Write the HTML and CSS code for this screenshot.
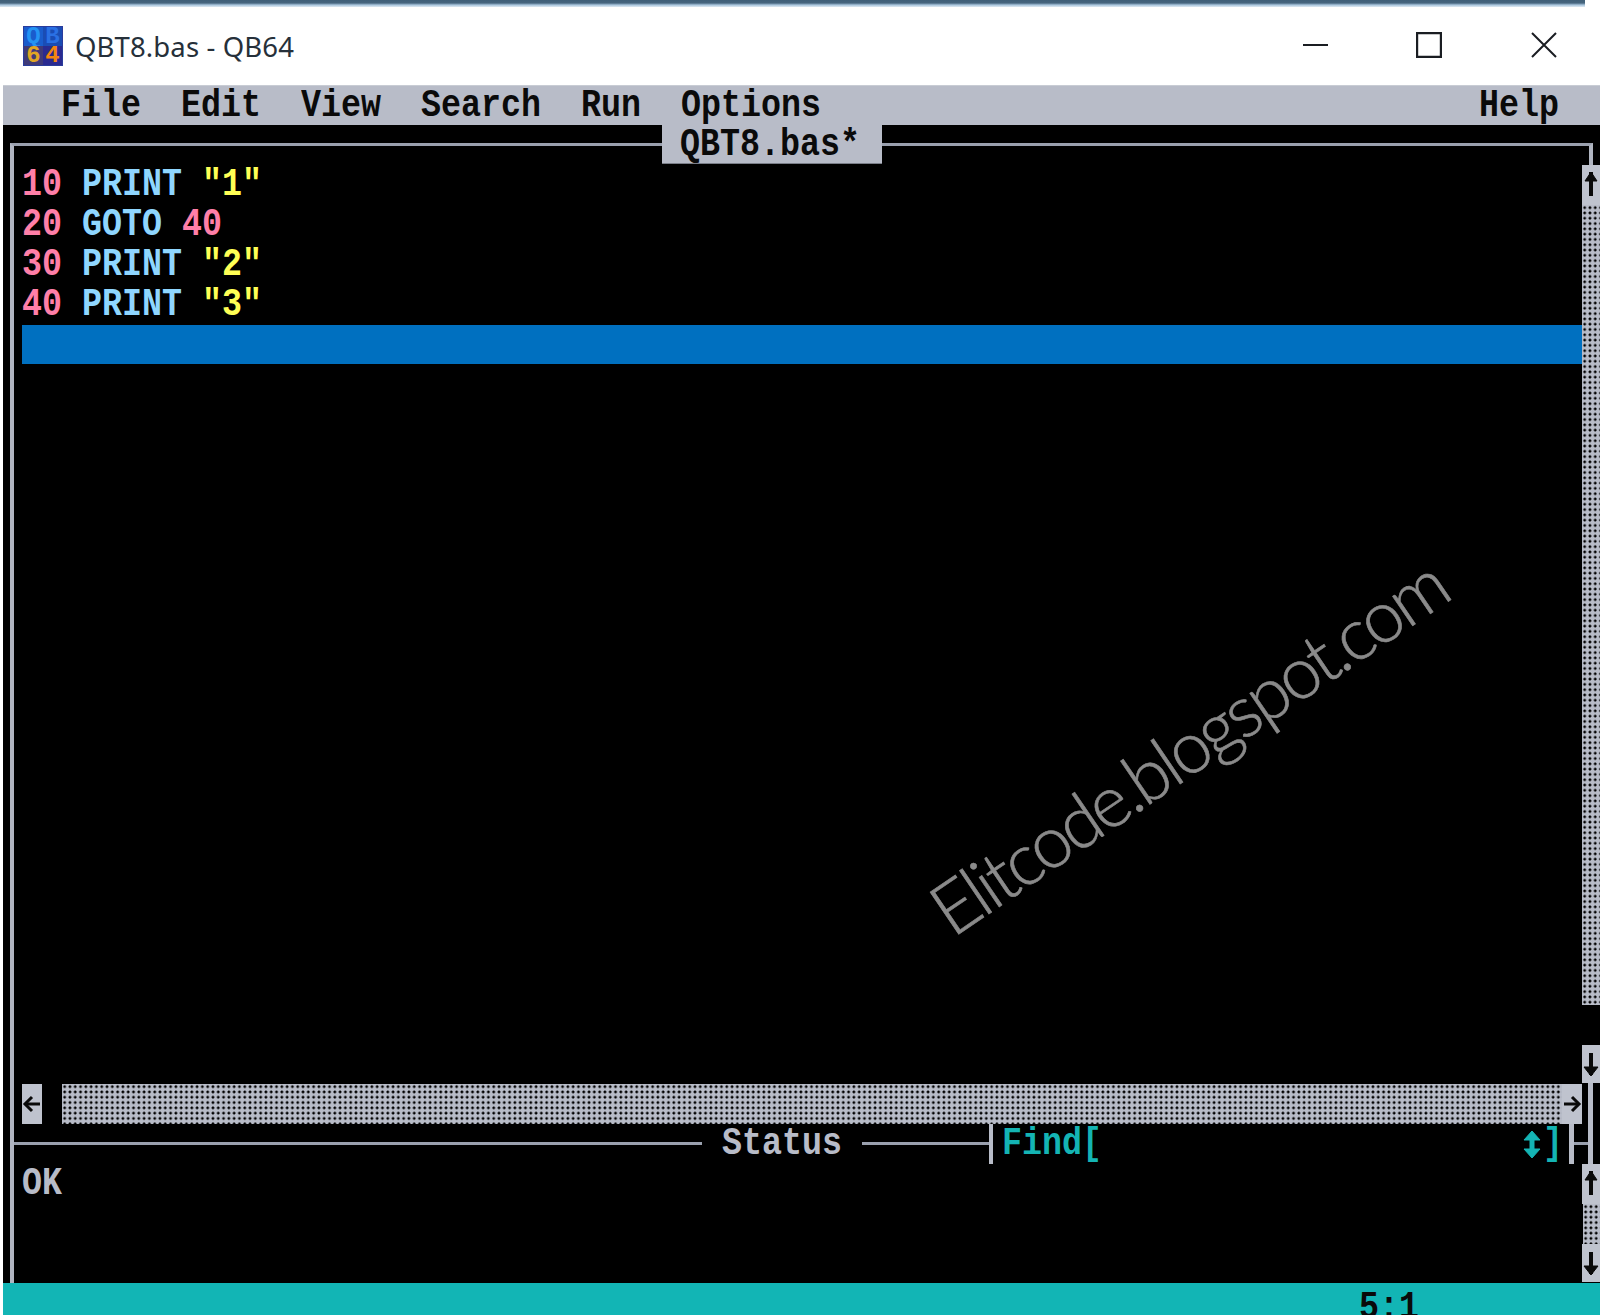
FILE: index.html
```html
<!DOCTYPE html>
<html lang="en">
<head>
<meta charset="utf-8">
<title>QBT8.bas - QB64</title>
<link rel="stylesheet" href="styles.css">
</head>
<body>
<svg class="defs" width="0" height="0" aria-hidden="true">
  <defs>
    <symbol id="arrow-up" viewBox="0 0 20 40"><path d="M10 7 L10 31" stroke-width="4"/><path d="M4 16 L10 7 L16 16 Z" stroke-width="1"/></symbol>
    <symbol id="arrow-down" viewBox="0 0 20 40"><path d="M10 8 L10 30" stroke-width="4"/><path d="M3 22 L10 31 L17 22 Z" stroke-width="1"/></symbol>
    <symbol id="arrow-left" viewBox="0 0 20 40"><path d="M4 20 L18 20" stroke-width="3"/><path d="M10 13 L3 20 L10 27" stroke-width="3" fill="none"/></symbol>
    <symbol id="arrow-right" viewBox="0 0 20 40"><path d="M2 20 L16 20" stroke-width="3"/><path d="M10 13 L17 20 L10 27" stroke-width="3" fill="none"/></symbol>
    <symbol id="arrow-both" viewBox="0 0 20 40"><path d="M10 10 L10 30" stroke-width="5"/><path d="M2 16 L10 7 L18 16 Z M2 25 L10 34 L18 25 Z" stroke-width="1"/></symbol>
  </defs>
</svg>
<div class="top-strip"></div>
<header class="titlebar">
  <div class="app-icon"><span class="q1">Q</span><span class="q2">B</span><span class="q3">6</span><span class="q4">4</span></div>
  <span class="win-title">QBT8.bas - QB64</span>
  <div class="win-controls">
    <svg class="ctl ctl-min" viewBox="0 0 26 26"><path d="M0 13H25"/></svg>
    <svg class="ctl ctl-max" viewBox="0 0 26 26"><path d="M1 1H25V25H1Z"/></svg>
    <svg class="ctl ctl-close" viewBox="0 0 26 26"><path d="M1 1L25 25M25 1L1 25"/></svg>
  </div>
</header>
<nav class="menubar dos">
  <span class="m"><span class="t">File</span></span>
  <span class="m"><span class="t">Edit</span></span>
  <span class="m"><span class="t">View</span></span>
  <span class="m"><span class="t">Search</span></span>
  <span class="m"><span class="t">Run</span></span>
  <span class="m"><span class="t">Options</span></span>
  <span class="m m-help"><span class="t">Help</span></span>
</nav>
<main class="ide dos">
  <div class="left">
    <div class="code">
      <div class="row"><span class="t"><span class="num">10</span> <span class="kw">PRINT</span> <span class="str">"1"</span></span></div>
      <div class="row"><span class="t"><span class="num">20</span> <span class="kw">GOTO</span> <span class="num">40</span></span></div>
      <div class="row"><span class="t"><span class="num">30</span> <span class="kw">PRINT</span> <span class="str">"2"</span></span></div>
      <div class="row"><span class="t"><span class="num">40</span> <span class="kw">PRINT</span> <span class="str">"3"</span></span></div>
      <div class="row current"></div>
    </div>
    <div class="hscroll">
      <div class="arrow-box"><svg class="ico"><use href="#arrow-left"/></svg></div>
      <div class="dither htrack"></div>
      <div class="arrow-box"><svg class="ico"><use href="#arrow-right"/></svg></div>
    </div>
    <div class="statusline">
      <div class="rule"></div>
      <span class="status-label"><span class="t">Status</span></span>
      <div class="rule rule-short"></div>
      <div class="find">
        <span class="t">Find[</span>
        <svg class="ico ico-both"><use href="#arrow-both"/></svg>
        <span class="t">]</span>
      </div>
      <div class="rule rule-end"></div>
    </div>
    <div class="output"><span class="t">OK</span></div>
  </div>
  <div class="right">
    <div class="corner"></div>
    <div class="arrow-box vbox"><svg class="ico"><use href="#arrow-up"/></svg></div>
    <div class="dither vtrack"></div>
    <div class="vgap"></div>
    <div class="arrow-box vbox vbox-low"><svg class="ico"><use href="#arrow-down"/></svg></div>
    <div class="stub"></div>
    <div class="arrow-box vbox"><svg class="ico"><use href="#arrow-up"/></svg></div>
    <div class="vtrack-small"><div class="dither"></div></div>
    <div class="arrow-box vbox vbox-low"><svg class="ico"><use href="#arrow-down"/></svg></div>
  </div>
  <div class="tab"><span class="t">QBT8.bas*</span></div>
  <div class="watermark">Elitcode.blogspot.com</div>
</main>
<footer class="statusbar dos"><span class="t">5:1</span></footer>
</body>
</html>
```
FILE: styles.css
```css
* { box-sizing: border-box; }
html, body { margin: 0; padding: 0; }
body {
  width: 1600px;
  height: 1315px;
  overflow: hidden;
  background: #fff;
  display: flex;
  flex-direction: column;
}
.defs { position: absolute; }
.top-strip {
  height: 7px;
  flex: none;
  background: linear-gradient(#3f5f78 0, #47667f 3px, #a9c6de 5px, #dfe9f2 7px);
  margin-right: 15px;
}
.titlebar {
  height: 78px;
  flex: none;
  display: flex;
  align-items: center;
  padding-left: 23px;
  background: #fff;
}
.app-icon {
  width: 40px;
  height: 40px;
  margin-top: -1px;
  display: grid;
  grid-template-columns: 19px 19px;
  grid-template-rows: 19px 19px;
  background: #1c2f9a;
  border: 1px solid #2a3c9c;
  font: bold 24px/19px "Liberation Mono", monospace;
  text-align: center;
}
.q1 { background: #1a5ccc; color: #2494f4; }
.q2 { background: #1a4cb4; color: #2a70e4; }
.q3 { background: #3f3a78; color: #e0a624; }
.q4 { background: #2a2a90; color: #f4860f; }
.win-title {
  margin-left: 12px;
  font: 400 27.5px "Noto Sans", "Open Sans", sans-serif;
  color: #26303a;
  letter-spacing: 0.12px;
}
.win-controls {
  margin-left: auto;
  margin-top: -2px;
  display: flex;
  align-items: center;
  padding-right: 43px;
  gap: 87px;
}
.ctl { width: 26px; height: 26px; fill: none; stroke: #1a1d22; stroke-width: 2; display: block; }
.ctl-max { stroke-width: 2.4; }
.ctl-close { margin-left: 2px; }

.dos {
  font-family: "Liberation Mono", monospace;
  font-weight: 700;
  font-size: 33.33px;
  line-height: 40px;
}
.t { display: inline-block; transform: scaleY(1.14); white-space: pre; }

.menubar {
  height: 40px;
  flex: none;
  margin-left: 3px;
  background: #b8bcc8;
  color: #0a0a0a;
  display: flex;
  gap: 40px;
  padding: 0 41px 0 58px;
  border-top: 1px solid #c8ccd4;
}
.m-help { margin-left: auto; }

.ide {
  flex: 1;
  min-height: 0;
  margin-left: 3px;
  background: #000;
  color: #b8bcc8;
  display: flex;
  position: relative;
}
.left {
  flex: 1;
  min-width: 0;
  margin: 18px 0 0 7px;
  border-left: 4px solid #b0b5c1;
  border-top: 3px solid #9aa0ae;
  display: flex;
  flex-direction: column;
}
.code {
  flex: 1;
  padding: 19px 0 0 8px;
}
.row { height: 40px; }
.row.current { background: #0070c0; height: 39px; }
.num { color: #ff7fa8; }
.kw { color: #8fd6ff; }
.str { color: #ffff55; }

.hscroll {
  height: 40px;
  flex: none;
  display: flex;
  padding-left: 8px;
}
.arrow-box { background: #bfc3ce; width: 20px; height: 40px; color: #0a0a0a; flex: none; }
.ico { display: block; width: 20px; height: 40px; stroke: #0a0a0a; fill: #0a0a0a; }
.htrack { flex: 1; margin-left: 20px; }
.dither {
  background-color: #b8bcc8;
  background-image: radial-gradient(circle at center, #000 0.9px, transparent 1.8px);
  background-size: 5.3px 5.3px;
}

.statusline {
  height: 40px;
  flex: none;
  display: flex;
  align-items: center;
}
.rule { height: 3px; background: #9aa0ae; flex: 1; margin-top: -1px; }
.status-label { padding: 0 20px; width: 160px; }
.rule-short { flex: none; width: 127px; }
.find {
  width: 585px;
  height: 40px;
  border-left: 4px solid #b8bcc8;
  border-right: 5px solid #b8bcc8;
  color: #14b4b4;
  display: flex;
  padding: 0 6px 0 9px;
}
.find .ico { margin-left: auto; margin-right: 1px; stroke: #14b4b4; fill: #14b4b4; }
.rule-end { flex: none; width: 8px; }

.output {
  flex: none;
  height: 119px;
  padding-left: 8px;
}

.right {
  flex: none;
  width: 18px;
  display: flex;
  flex-direction: column;
}
.corner {
  height: 22px;
  flex: none;
  width: 11px;
  margin-top: 18px;
  border-top: 3px solid #9aa0ae;
  border-right: 4px solid #b0b5c1;
}
.vbox { width: 18px; }
.vbox .ico { margin-left: -1px; }
.vbox-low { height: 38px; }
.vtrack { height: 800px; flex: none; }
.vgap { height: 40px; flex: none; }
.stub {
  height: 81px;
  flex: none;
  width: 11px;
  border-right: 5px solid #b8bcc8;
  background: linear-gradient(#9aa0ae,#9aa0ae) no-repeat 0 59px/100% 3px;
}
.vtrack-small { height: 40px; flex: none; padding-left: 1px; }
.vtrack-small .dither { height: 100%; }

.tab {
  position: absolute;
  left: 659px;
  top: 0;
  width: 220px;
  height: 39px;
  background: #b8bcc8;
  color: #0a0a0a;
  padding-left: 18px;
  border-bottom: 1px solid #7a7e88;
}
.watermark {
  position: absolute;
  left: 958px;
  top: 740px;
  font: 300 72px "Lato", sans-serif;
  letter-spacing: -3.6px;
  -webkit-text-stroke: 0.6px #8a8a8a;
  color: #8a8a8a;
  transform: rotate(-34.2deg);
  transform-origin: left bottom;
  white-space: nowrap;
}

.statusbar {
  height: 32px;
  flex: none;
  margin-left: 3px;
  background: #12b5b5;
  color: #0a0a0a;
  overflow: hidden;
  padding-left: 1356px;
}
.statusbar .t { margin-top: 5px; }
```
